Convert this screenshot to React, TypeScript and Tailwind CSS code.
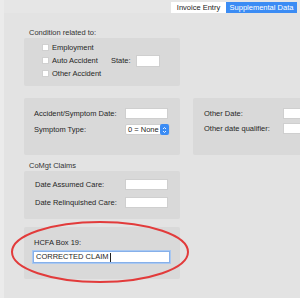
import React from "react";

function Field({ w = 43 }: { w?: number }) {
  return (
    <div
      className="h-[11px] shrink-0 border border-[#cfcfcf] bg-white"
      style={{ width: w }}
    />
  );
}

function Check({ label }: { label: string }) {
  return (
    <div className="flex items-center">
      <div className="h-[7px] w-[7px] shrink-0 border border-[#d0d0d0] bg-white" />
      <span className="ml-[3px]">{label}</span>
    </div>
  );
}

function Row({ label, labelW, children }: { label: string; labelW: number; children: React.ReactNode }) {
  return (
    <div className="flex items-center">
      <div className="shrink-0" style={{ width: labelW }}>
        {label}
      </div>
      {children}
    </div>
  );
}

export default function App() {
  return (
    <div className="relative h-[298px] w-[300px] overflow-hidden border-l-[4px] border-[#ebebeb] bg-[#e3e3e3] font-['Liberation_Sans',Arial,sans-serif] text-[7.5px] leading-[10px] text-[#262626]">
      {/* tabs */}
      <div className="flex h-[13px] justify-end bg-[#e6e6e6] pr-[3px] pt-[2px]">
        <div className="flex h-[11px] w-[55px] items-center justify-center bg-white text-[#222]">Invoice Entry</div>
        <div className="flex h-[11px] w-[71px] items-center justify-center bg-[#3b8cf4] text-white">Supplemental Data</div>
      </div>

      <div className="pl-[20px]">
        <div className="mt-[15px] pl-[5px] text-[#333]">Condition related to:</div>
        <div className="h-[48px] w-[156px] rounded-[2px] bg-[#d9d9d9] pl-[18px] pt-[3px]">
          <div className="flex h-[13px] items-center">
            <Check label="Employment" />
          </div>
          <div className="flex h-[13px] items-center">
            <div className="w-[69px] shrink-0">
              <Check label="Auto Accident" />
            </div>
            <span>State:</span>
            <div className="ml-[5px] h-[12px] w-[24px] border border-[#cfcfcf] bg-white" />
          </div>
          <div className="flex h-[13px] items-center">
            <Check label="Other Accident" />
          </div>
        </div>

        <div className="mt-[12px] flex gap-[13px]">
          <div className="h-[57px] w-[156px] shrink-0 rounded-[2px] bg-[#d9d9d9] pl-[10px] pt-[10px]">
            <Row label="Accident/Symptom Date:" labelW={91}>
              <Field />
            </Row>
            <div className="mt-[5px]">
              <Row label="Symptom Type:" labelW={91}>
                <div className="flex h-[11px] w-[45px] items-center justify-between rounded-[2px] border border-[#cfcfcf] bg-white pl-[2px]">
                  <span>0 = None</span>
                  <div className="flex h-[11px] w-[9px] flex-col items-center justify-center rounded-[2px] bg-[#3b8cf4]">
                    <svg width="5" height="8" viewBox="0 0 5 8" fill="none" stroke="white" strokeWidth="0.9">
                      <path d="M1 3 L2.5 1.5 L4 3" />
                      <path d="M1 5 L2.5 6.5 L4 5" />
                    </svg>
                  </div>
                </div>
              </Row>
            </div>
          </div>
          <div className="h-[57px] w-[140px] shrink-0 rounded-[2px] bg-[#d9d9d9] pl-[11px] pt-[10px]">
            <Row label="Other Date:" labelW={79}>
              <Field w={40} />
            </Row>
            <div className="mt-[4px]">
              <Row label="Other date qualifier:" labelW={79}>
                <Field w={40} />
              </Row>
            </div>
          </div>
        </div>

        <div className="mt-[6px] pl-[5px] text-[#333]">CoMgt Claims</div>
        <div className="h-[48px] w-[156px] rounded-[2px] bg-[#d9d9d9] pl-[11px] pt-[8px]">
          <Row label="Date Assumed Care:" labelW={90}>
            <Field />
          </Row>
          <div className="mt-[7px]">
            <Row label="Date Relinquished Care:" labelW={90}>
              <Field />
            </Row>
          </div>
        </div>

        <div className="mt-[8px] h-[52px] w-[156px] rounded-[2px] bg-[#d9d9d9] pl-[9px] pt-[11px]">
          <div className="pl-[1px]">HCFA Box 19:</div>
          <div className="mt-[3px] flex h-[12px] w-[137px] items-center border border-[#86b0ea] bg-white pl-[2px] shadow-[0_0_0_1px_#a9c8f1]">
            <span>CORRECTED CLAIM</span>
            <span className="ml-[1px] h-[9px] w-px bg-[#222]" />
          </div>
        </div>
      </div>

      <svg className="absolute left-0 top-[215px]" width="200" height="80" viewBox="0 0 200 80" fill="none">
        <ellipse cx="96" cy="37" rx="88" ry="30" stroke="#e23b3b" strokeWidth="2" />
      </svg>
    </div>
  );
}
